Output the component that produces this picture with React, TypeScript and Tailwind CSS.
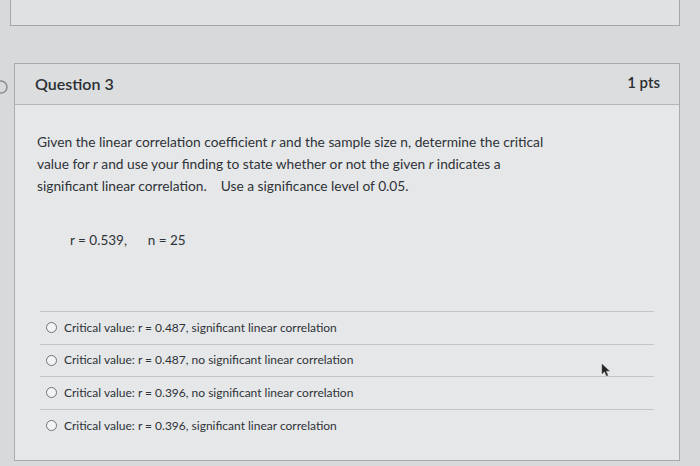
const answers = [
  'Critical value: r = 0.487, significant linear correlation',
  'Critical value: r = 0.487, no significant linear correlation',
  'Critical value: r = 0.396, no significant linear correlation',
  'Critical value: r = 0.396, significant linear correlation',
];

export default function App() {
  return (
    <div
      className="relative w-[700px] h-[466px] overflow-hidden bg-[#d8d9da] text-[#2e3338]"
      style={{ fontFamily: 'Lato, "Open Sans", sans-serif' }}
    >
      {/* previous question card, cut off at the top */}
      <div className="ml-[10px] w-[670px] h-[26px] border border-t-0 border-[#a4a6a8] bg-[#e0e1e2]" />

      {/* flag marker */}
      <svg className="absolute left-[-6px] top-[79px]" width="16" height="16" viewBox="0 0 16 16">
        <circle cx="7" cy="8" r="6" fill="none" stroke="#8a8d90" strokeWidth="1.5" />
      </svg>

      <div className="mt-[37px] ml-[14px] w-[666px] h-[398px] border border-[#a9abad] bg-[#e6e7e8]">
        <div className="h-[41px] flex items-center justify-between pl-[20px] pr-[19px] bg-[#dcddde] border-b border-[#b4b6b8]">
          <span className="text-[16px] font-semibold text-[#2b2f33]">Question 3</span>
          <span className="text-[15px] font-semibold text-[#2b2f33] -mt-[4px]">1 pts</span>
        </div>

        <div className="pl-[22px] pr-[20px] pt-[26px]">
          <p className="text-[13.75px] leading-[22px] w-[512px]">
            Given the linear correlation coefficient <i>r</i> and the sample size n, determine the critical value for <i>r</i> and use your finding to state whether or not the given <i>r</i> indicates a significant linear correlation.&nbsp;&nbsp;&nbsp; Use a significance level of 0.05.
          </p>

          <p className="mt-[33px] ml-[33px] text-[13.5px] leading-[20px]">
            r = 0.539,&nbsp;&nbsp;&nbsp;&nbsp;&nbsp; n = 25
          </p>

          <div className="mt-[61px] ml-[3px] mr-[5px] border-t border-[#c3c5c7]">
            {answers.map((a) => (
              <div key={a} className="h-[32.5px] flex items-center gap-[7px] pl-[6px] border-b border-[#c3c5c7] last:border-b-0">
                <span className="w-[11px] h-[11px] rounded-full border border-[#6f7378] bg-[#f2f3f3]" />
                <span className="text-[12px]">{a}</span>
              </div>
            ))}
          </div>
        </div>
      </div>

      {/* mouse cursor */}
      <svg className="absolute left-[601px] top-[363px]" width="10" height="14" viewBox="0 0 10 14">
        <path d="M1 1 L1 11 L3.5 8.5 L5.5 13 L7 12.3 L5 8 L8.5 8 Z" fill="#222" stroke="#666" strokeWidth="0.5" />
      </svg>
    </div>
  );
}
